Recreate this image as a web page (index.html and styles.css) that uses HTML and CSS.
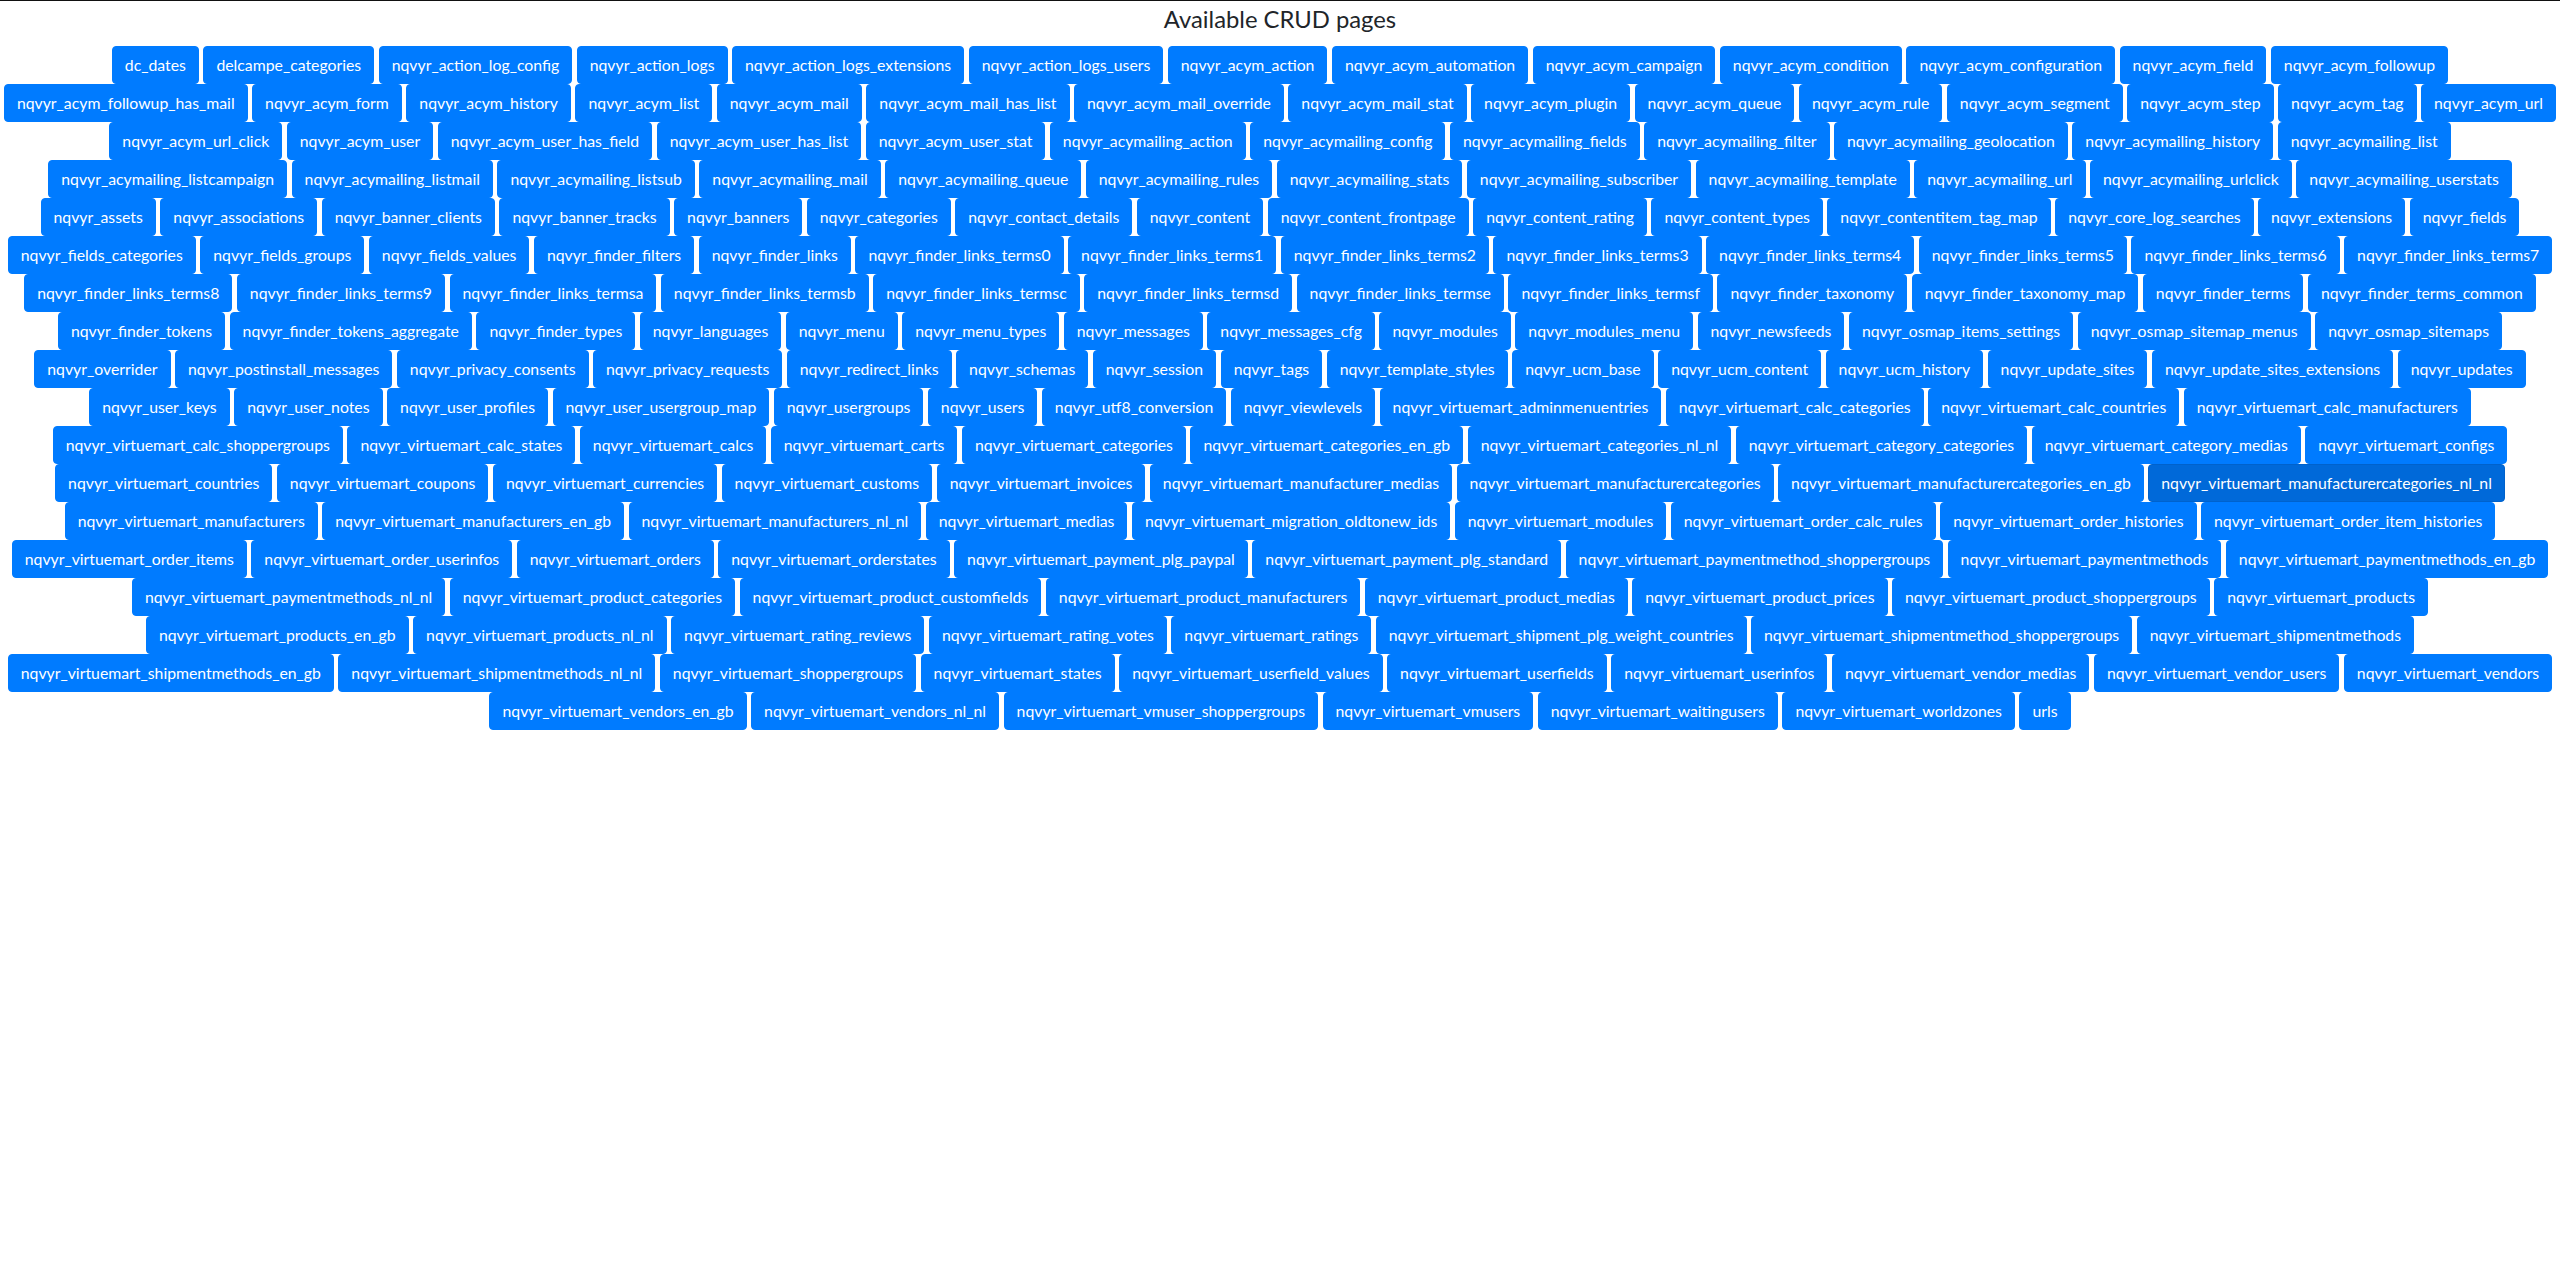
FILE: index.html
```html
<!DOCTYPE html>
<html lang="en">
<head>
<meta charset="utf-8">
<title>Available CRUD pages</title>
<link rel="stylesheet" href="styles.css">
</head>
<body>
<main class="page">
<h4 class="title">Available CRUD pages</h4>
<nav class="rows">
<div class="line"><a class="btn" href="#">dc_dates</a><a class="btn" href="#">delcampe_categories</a><a class="btn" href="#">nqvyr_action_log_config</a><a class="btn" href="#">nqvyr_action_logs</a><a class="btn" href="#">nqvyr_action_logs_extensions</a><a class="btn" href="#">nqvyr_action_logs_users</a><a class="btn" href="#">nqvyr_acym_action</a><a class="btn" href="#">nqvyr_acym_automation</a><a class="btn" href="#">nqvyr_acym_campaign</a><a class="btn" href="#">nqvyr_acym_condition</a><a class="btn" href="#">nqvyr_acym_configuration</a><a class="btn" href="#">nqvyr_acym_field</a><a class="btn" href="#">nqvyr_acym_followup</a></div>
<div class="line"><a class="btn" href="#">nqvyr_acym_followup_has_mail</a><a class="btn" href="#">nqvyr_acym_form</a><a class="btn" href="#">nqvyr_acym_history</a><a class="btn" href="#">nqvyr_acym_list</a><a class="btn" href="#">nqvyr_acym_mail</a><a class="btn" href="#">nqvyr_acym_mail_has_list</a><a class="btn" href="#">nqvyr_acym_mail_override</a><a class="btn" href="#">nqvyr_acym_mail_stat</a><a class="btn" href="#">nqvyr_acym_plugin</a><a class="btn" href="#">nqvyr_acym_queue</a><a class="btn" href="#">nqvyr_acym_rule</a><a class="btn" href="#">nqvyr_acym_segment</a><a class="btn" href="#">nqvyr_acym_step</a><a class="btn" href="#">nqvyr_acym_tag</a><a class="btn" href="#">nqvyr_acym_url</a></div>
<div class="line"><a class="btn" href="#">nqvyr_acym_url_click</a><a class="btn" href="#">nqvyr_acym_user</a><a class="btn" href="#">nqvyr_acym_user_has_field</a><a class="btn" href="#">nqvyr_acym_user_has_list</a><a class="btn" href="#">nqvyr_acym_user_stat</a><a class="btn" href="#">nqvyr_acymailing_action</a><a class="btn" href="#">nqvyr_acymailing_config</a><a class="btn" href="#">nqvyr_acymailing_fields</a><a class="btn" href="#">nqvyr_acymailing_filter</a><a class="btn" href="#">nqvyr_acymailing_geolocation</a><a class="btn" href="#">nqvyr_acymailing_history</a><a class="btn" href="#">nqvyr_acymailing_list</a></div>
<div class="line"><a class="btn" href="#">nqvyr_acymailing_listcampaign</a><a class="btn" href="#">nqvyr_acymailing_listmail</a><a class="btn" href="#">nqvyr_acymailing_listsub</a><a class="btn" href="#">nqvyr_acymailing_mail</a><a class="btn" href="#">nqvyr_acymailing_queue</a><a class="btn" href="#">nqvyr_acymailing_rules</a><a class="btn" href="#">nqvyr_acymailing_stats</a><a class="btn" href="#">nqvyr_acymailing_subscriber</a><a class="btn" href="#">nqvyr_acymailing_template</a><a class="btn" href="#">nqvyr_acymailing_url</a><a class="btn" href="#">nqvyr_acymailing_urlclick</a><a class="btn" href="#">nqvyr_acymailing_userstats</a></div>
<div class="line"><a class="btn" href="#">nqvyr_assets</a><a class="btn" href="#">nqvyr_associations</a><a class="btn" href="#">nqvyr_banner_clients</a><a class="btn" href="#">nqvyr_banner_tracks</a><a class="btn" href="#">nqvyr_banners</a><a class="btn" href="#">nqvyr_categories</a><a class="btn" href="#">nqvyr_contact_details</a><a class="btn" href="#">nqvyr_content</a><a class="btn" href="#">nqvyr_content_frontpage</a><a class="btn" href="#">nqvyr_content_rating</a><a class="btn" href="#">nqvyr_content_types</a><a class="btn" href="#">nqvyr_contentitem_tag_map</a><a class="btn" href="#">nqvyr_core_log_searches</a><a class="btn" href="#">nqvyr_extensions</a><a class="btn" href="#">nqvyr_fields</a></div>
<div class="line"><a class="btn" href="#">nqvyr_fields_categories</a><a class="btn" href="#">nqvyr_fields_groups</a><a class="btn" href="#">nqvyr_fields_values</a><a class="btn" href="#">nqvyr_finder_filters</a><a class="btn" href="#">nqvyr_finder_links</a><a class="btn" href="#">nqvyr_finder_links_terms0</a><a class="btn" href="#">nqvyr_finder_links_terms1</a><a class="btn" href="#">nqvyr_finder_links_terms2</a><a class="btn" href="#">nqvyr_finder_links_terms3</a><a class="btn" href="#">nqvyr_finder_links_terms4</a><a class="btn" href="#">nqvyr_finder_links_terms5</a><a class="btn" href="#">nqvyr_finder_links_terms6</a><a class="btn" href="#">nqvyr_finder_links_terms7</a></div>
<div class="line"><a class="btn" href="#">nqvyr_finder_links_terms8</a><a class="btn" href="#">nqvyr_finder_links_terms9</a><a class="btn" href="#">nqvyr_finder_links_termsa</a><a class="btn" href="#">nqvyr_finder_links_termsb</a><a class="btn" href="#">nqvyr_finder_links_termsc</a><a class="btn" href="#">nqvyr_finder_links_termsd</a><a class="btn" href="#">nqvyr_finder_links_termse</a><a class="btn" href="#">nqvyr_finder_links_termsf</a><a class="btn" href="#">nqvyr_finder_taxonomy</a><a class="btn" href="#">nqvyr_finder_taxonomy_map</a><a class="btn" href="#">nqvyr_finder_terms</a><a class="btn" href="#">nqvyr_finder_terms_common</a></div>
<div class="line"><a class="btn" href="#">nqvyr_finder_tokens</a><a class="btn" href="#">nqvyr_finder_tokens_aggregate</a><a class="btn" href="#">nqvyr_finder_types</a><a class="btn" href="#">nqvyr_languages</a><a class="btn" href="#">nqvyr_menu</a><a class="btn" href="#">nqvyr_menu_types</a><a class="btn" href="#">nqvyr_messages</a><a class="btn" href="#">nqvyr_messages_cfg</a><a class="btn" href="#">nqvyr_modules</a><a class="btn" href="#">nqvyr_modules_menu</a><a class="btn" href="#">nqvyr_newsfeeds</a><a class="btn" href="#">nqvyr_osmap_items_settings</a><a class="btn" href="#">nqvyr_osmap_sitemap_menus</a><a class="btn" href="#">nqvyr_osmap_sitemaps</a></div>
<div class="line"><a class="btn" href="#">nqvyr_overrider</a><a class="btn" href="#">nqvyr_postinstall_messages</a><a class="btn" href="#">nqvyr_privacy_consents</a><a class="btn" href="#">nqvyr_privacy_requests</a><a class="btn" href="#">nqvyr_redirect_links</a><a class="btn" href="#">nqvyr_schemas</a><a class="btn" href="#">nqvyr_session</a><a class="btn" href="#">nqvyr_tags</a><a class="btn" href="#">nqvyr_template_styles</a><a class="btn" href="#">nqvyr_ucm_base</a><a class="btn" href="#">nqvyr_ucm_content</a><a class="btn" href="#">nqvyr_ucm_history</a><a class="btn" href="#">nqvyr_update_sites</a><a class="btn" href="#">nqvyr_update_sites_extensions</a><a class="btn" href="#">nqvyr_updates</a></div>
<div class="line"><a class="btn" href="#">nqvyr_user_keys</a><a class="btn" href="#">nqvyr_user_notes</a><a class="btn" href="#">nqvyr_user_profiles</a><a class="btn" href="#">nqvyr_user_usergroup_map</a><a class="btn" href="#">nqvyr_usergroups</a><a class="btn" href="#">nqvyr_users</a><a class="btn" href="#">nqvyr_utf8_conversion</a><a class="btn" href="#">nqvyr_viewlevels</a><a class="btn" href="#">nqvyr_virtuemart_adminmenuentries</a><a class="btn" href="#">nqvyr_virtuemart_calc_categories</a><a class="btn" href="#">nqvyr_virtuemart_calc_countries</a><a class="btn" href="#">nqvyr_virtuemart_calc_manufacturers</a></div>
<div class="line"><a class="btn" href="#">nqvyr_virtuemart_calc_shoppergroups</a><a class="btn" href="#">nqvyr_virtuemart_calc_states</a><a class="btn" href="#">nqvyr_virtuemart_calcs</a><a class="btn" href="#">nqvyr_virtuemart_carts</a><a class="btn" href="#">nqvyr_virtuemart_categories</a><a class="btn" href="#">nqvyr_virtuemart_categories_en_gb</a><a class="btn" href="#">nqvyr_virtuemart_categories_nl_nl</a><a class="btn" href="#">nqvyr_virtuemart_category_categories</a><a class="btn" href="#">nqvyr_virtuemart_category_medias</a><a class="btn" href="#">nqvyr_virtuemart_configs</a></div>
<div class="line"><a class="btn" href="#">nqvyr_virtuemart_countries</a><a class="btn" href="#">nqvyr_virtuemart_coupons</a><a class="btn" href="#">nqvyr_virtuemart_currencies</a><a class="btn" href="#">nqvyr_virtuemart_customs</a><a class="btn" href="#">nqvyr_virtuemart_invoices</a><a class="btn" href="#">nqvyr_virtuemart_manufacturer_medias</a><a class="btn" href="#">nqvyr_virtuemart_manufacturercategories</a><a class="btn" href="#">nqvyr_virtuemart_manufacturercategories_en_gb</a><a class="btn btn-hover" href="#">nqvyr_virtuemart_manufacturercategories_nl_nl</a></div>
<div class="line"><a class="btn" href="#">nqvyr_virtuemart_manufacturers</a><a class="btn" href="#">nqvyr_virtuemart_manufacturers_en_gb</a><a class="btn" href="#">nqvyr_virtuemart_manufacturers_nl_nl</a><a class="btn" href="#">nqvyr_virtuemart_medias</a><a class="btn" href="#">nqvyr_virtuemart_migration_oldtonew_ids</a><a class="btn" href="#">nqvyr_virtuemart_modules</a><a class="btn" href="#">nqvyr_virtuemart_order_calc_rules</a><a class="btn" href="#">nqvyr_virtuemart_order_histories</a><a class="btn" href="#">nqvyr_virtuemart_order_item_histories</a></div>
<div class="line"><a class="btn" href="#">nqvyr_virtuemart_order_items</a><a class="btn" href="#">nqvyr_virtuemart_order_userinfos</a><a class="btn" href="#">nqvyr_virtuemart_orders</a><a class="btn" href="#">nqvyr_virtuemart_orderstates</a><a class="btn" href="#">nqvyr_virtuemart_payment_plg_paypal</a><a class="btn" href="#">nqvyr_virtuemart_payment_plg_standard</a><a class="btn" href="#">nqvyr_virtuemart_paymentmethod_shoppergroups</a><a class="btn" href="#">nqvyr_virtuemart_paymentmethods</a><a class="btn" href="#">nqvyr_virtuemart_paymentmethods_en_gb</a></div>
<div class="line"><a class="btn" href="#">nqvyr_virtuemart_paymentmethods_nl_nl</a><a class="btn" href="#">nqvyr_virtuemart_product_categories</a><a class="btn" href="#">nqvyr_virtuemart_product_customfields</a><a class="btn" href="#">nqvyr_virtuemart_product_manufacturers</a><a class="btn" href="#">nqvyr_virtuemart_product_medias</a><a class="btn" href="#">nqvyr_virtuemart_product_prices</a><a class="btn" href="#">nqvyr_virtuemart_product_shoppergroups</a><a class="btn" href="#">nqvyr_virtuemart_products</a></div>
<div class="line"><a class="btn" href="#">nqvyr_virtuemart_products_en_gb</a><a class="btn" href="#">nqvyr_virtuemart_products_nl_nl</a><a class="btn" href="#">nqvyr_virtuemart_rating_reviews</a><a class="btn" href="#">nqvyr_virtuemart_rating_votes</a><a class="btn" href="#">nqvyr_virtuemart_ratings</a><a class="btn" href="#">nqvyr_virtuemart_shipment_plg_weight_countries</a><a class="btn" href="#">nqvyr_virtuemart_shipmentmethod_shoppergroups</a><a class="btn" href="#">nqvyr_virtuemart_shipmentmethods</a></div>
<div class="line"><a class="btn" href="#">nqvyr_virtuemart_shipmentmethods_en_gb</a><a class="btn" href="#">nqvyr_virtuemart_shipmentmethods_nl_nl</a><a class="btn" href="#">nqvyr_virtuemart_shoppergroups</a><a class="btn" href="#">nqvyr_virtuemart_states</a><a class="btn" href="#">nqvyr_virtuemart_userfield_values</a><a class="btn" href="#">nqvyr_virtuemart_userfields</a><a class="btn" href="#">nqvyr_virtuemart_userinfos</a><a class="btn" href="#">nqvyr_virtuemart_vendor_medias</a><a class="btn" href="#">nqvyr_virtuemart_vendor_users</a><a class="btn" href="#">nqvyr_virtuemart_vendors</a></div>
<div class="line"><a class="btn" href="#">nqvyr_virtuemart_vendors_en_gb</a><a class="btn" href="#">nqvyr_virtuemart_vendors_nl_nl</a><a class="btn" href="#">nqvyr_virtuemart_vmuser_shoppergroups</a><a class="btn" href="#">nqvyr_virtuemart_vmusers</a><a class="btn" href="#">nqvyr_virtuemart_waitingusers</a><a class="btn" href="#">nqvyr_virtuemart_worldzones</a><a class="btn" href="#">urls</a></div>
</nav>
</main>
</body>
</html>
```

FILE: styles.css
```css
html, body {
  margin: 0;
  padding: 0;
  background: #fff;
}
body {
  border-top: 1px solid #111;
  font-family: Lato, "Open Sans", sans-serif;
  color: #212529;
}
.page {
  display: flex;
  flex-direction: column;
  align-items: center;
}
.title {
  margin: 0;
  padding-top: 4px;
  height: 45px;
  box-sizing: border-box;
  font-size: 23.8px;
  font-weight: 400;
  line-height: 29px;
  text-align: center;
  color: #212529;
}
.rows {
  display: flex;
  flex-direction: column;
  width: 100%;
}
.line {
  display: flex;
  justify-content: center;
  column-gap: 4.5px;
}
.btn {
  display: block;
  padding: 6px 12px;
  border: 1px solid #007bff;
  border-radius: 4px;
  background: #007bff;
  color: #fff;
  font-size: 15.8px;
  line-height: 24px;
  white-space: nowrap;
  text-decoration: none;
}
.btn-hover {
  background: #0069d9;
  border-color: #0062cc;
}
```
